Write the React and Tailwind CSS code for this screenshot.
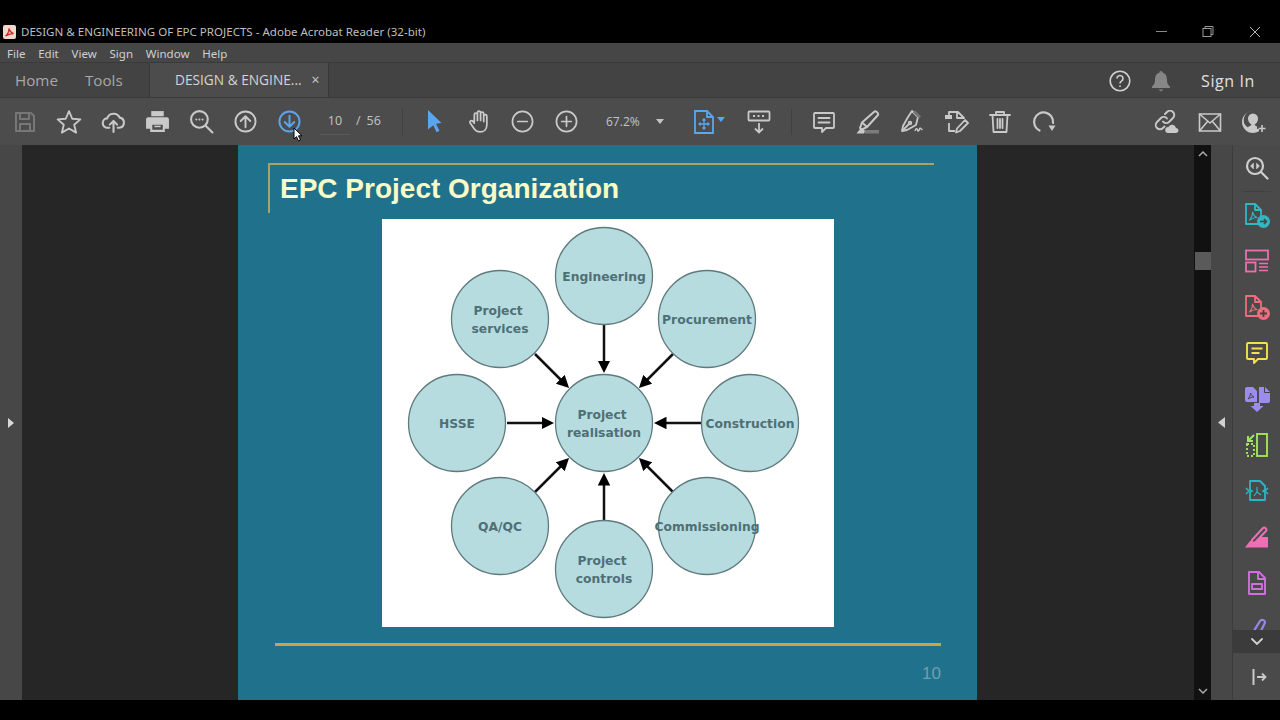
import React from "react";

const Svg = ({ children, size = 24, className = "", fill = "none", sw = 2 }) => (
  <svg width={size} height={size} viewBox="0 0 24 24" fill={fill} stroke={fill === "none" ? "currentColor" : "none"} strokeWidth={sw} strokeLinecap="round" strokeLinejoin="round" className={className}>
    {children}
  </svg>
);

// toolbar icons
const SaveIcon = () => (
  <Svg className="text-[#777777]">
    <path d="M3 3h15l3 3v15H3z" />
    <path d="M7 3v6h9V3M7 21v-7h10v7" />
  </Svg>
);
const StarIcon = () => (
  <Svg size={26} sw={1.7}><path d="M12 2l3 7 7.5.6-5.7 4.9 1.8 7.3L12 18l-6.6 3.8 1.8-7.3L1.5 9.6 9 9z" /></Svg>
);
const UploadCloud = () => (
  <Svg size={25}>
    <path d="M8 18H6.5a4.5 4.5 0 0 1-.6-9A6.5 6.5 0 0 1 18 8.300a4.900 4.900 0 0 1-.5 9.700H16" />
    <path d="M12 22v-10M8.500 15l3.500-3.500 3.500 3.500" />
  </Svg>
);
const PrintIcon = () => (
  <Svg size={25} fill="currentColor">
    <path d="M6 2h12v5H6z" />
    <path fillRule="evenodd" d="M3 8h18a2 2 0 0 1 2 2v9h-4v3H5v-3H1v-9a2 2 0 0 1 2-2zm4 7v5h10v-5z" />
    <path d="M9 16h6v1.500H9z" />
  </Svg>
);
const ZoomDots = () => (
  <Svg size={25}>
    <circle cx="10" cy="10" r="8" />
    <path d="M16 16l6.500 6.500" />
    <path d="M7 10h.01M10 10h.01M13 10h.01" />
  </Svg>
);
const CircleArrow = ({ up, className = "" }) => (
  <Svg size={23} className={className}>
    <circle cx="12" cy="12" r="10.500" />
    {up ? <path d="M12 18V7M7 11.500L12 6.500l5 5" /> : <path d="M12 6v11M7 12.500l5 5 5-5" />}
  </Svg>
);
const PointerIcon = () => (
  <svg width="15" height="23" viewBox="0 0 15 23"><path d="M1 0l13.500 13-5.500.7 3.500 7-3 1.500-3.200-7L1 19.500z" fill="#5aa6ee" /></svg>
);
const HandIcon = () => (
  <Svg size={25} sw={1.700}>
    <path d="M8 12V5.500a1.500 1.500 0 0 1 3 0V11M11 11V3.500a1.500 1.500 0 0 1 3 0V11M14 11V4.500a1.500 1.500 0 0 1 3 0V12M17 12V7a1.500 1.500 0 0 1 3 0v8c0 4-2.500 7-6.500 7-3 0-4.500-1.200-6-3.500L4 13.500c-1-1.500 1-3 2.500-1.800L8 13.500" />
  </Svg>
);
const CircleSign = ({ plus }) => (
  <Svg size={23} sw={1.800}>
    <circle cx="12" cy="12" r="10.500" />
    <path d="M7 12h10" />
    {plus && <path d="M12 7v10" />}
  </Svg>
);
const FitIcon = () => (
  <svg width="20" height="24" viewBox="0 0 20 24" fill="none" stroke="#5aa6ee" strokeWidth="1.800">
    <path d="M1 1h12l6 6v16H1z" />
    <path d="M13 1v6h6" />
    <path d="M10 9v10M5 14h10M8.500 10.500L10 9l1.500 1.500M8.500 17.500L10 19l1.500-1.500M6.500 12.500L5 14l1.500 1.500M13.500 12.500L15 14l-1.500 1.500" strokeWidth="1.300" />
  </svg>
);
const ScrollModeIcon = () => (
  <svg width="24" height="24" viewBox="0 0 24 24" fill="none" stroke="currentColor" strokeWidth="1.800">
    <rect x="1.500" y="1.500" width="21" height="9" rx="1" />
    <path d="M6 6h2M10.500 6h2M15 6h2" strokeWidth="2" />
    <path d="M12 13v9M8 18.500l4 4 4-4" />
  </svg>
);
const CommentIcon = () => (
  <Svg size={24} sw={1.800}>
    <path d="M3 3h18a1 1 0 0 1 1 1v13a1 1 0 0 1-1 1h-7l-4 4v-4H3a1 1 0 0 1-1-1V4a1 1 0 0 1 1-1z" />
    <path d="M6.500 8h11M6.500 12.500h11" />
  </Svg>
);
const HighlightIcon = () => (
  <svg width="24" height="24" viewBox="0 0 24 24" fill="none" stroke="currentColor" strokeWidth="2" strokeLinejoin="round">
    <path d="M18.500 1.500c1-1 4.500 2 3.500 3.500L11 17l-5-4.500z" />
    <path d="M6 12.500L4 18l2 1.500 5-2.500" />
    <path d="M0.500 23.500l3.500-4.500h3l2 2-1 2.500z" fill="currentColor" stroke="none" />
    <rect x="9" y="20" width="14" height="3.500" fill="#7c7c7c" stroke="none" />
  </svg>
);
const PenIcon = () => (
  <svg width="24" height="24" viewBox="0 0 24 24" fill="none" stroke="currentColor" strokeWidth="1.800" strokeLinejoin="round">
    <path d="M12 1l6 6-2 8-9 5-5 1 1-5 5-9z" />
    <path d="M3 20l6-6" />
    <circle cx="10" cy="13" r="1.300" />
    <path d="M14 1.500l6 6" stroke="#777777" strokeWidth="3" />
    <path d="M15 21c1-3 2-3 2.500-1s1.500 1 2-1 1.500 0 3 1" strokeWidth="1.400" />
  </svg>
);
const EditPdfIcon = () => (
  <svg width="25" height="24" viewBox="0 0 25 24" fill="none" stroke="currentColor" strokeWidth="1.800" strokeLinejoin="round">
    <path d="M5 8V2h9l6 6h-7V2" />
    <rect x="1" y="5" width="7" height="4" fill="currentColor" stroke="none" />
    <path d="M5 13v8h6" />
    <path d="M21 10l3 3-8 8-4 1.500 1-4z" />
  </svg>
);
const TrashIcon = () => (
  <Svg size={24} sw={1.800}>
    <path d="M2 5h20M8 5V2h8v3M4.500 5l1 17h13l1-17" />
    <path d="M9.500 9v9M12 9v9M14.500 9v9" />
  </Svg>
);
const RotateIcon = () => (
  <svg width="24" height="24" viewBox="0 0 24 24" fill="none" stroke="currentColor" strokeWidth="2.200" strokeLinecap="round">
    <path d="M7.500 20.500A9.500 9.500 0 1 1 21 13" />
    <path d="M16.500 15.500h7L20 21z" fill="currentColor" stroke="none" />
  </svg>
);
const LinkCloudIcon = () => (
  <svg width="26" height="24" viewBox="0 0 26 24" fill="none" stroke="currentColor" strokeWidth="1.900" strokeLinecap="round">
    <path d="M10 11.500a4 4 0 0 0 6 .5l4-4a4 4 0 0 0-6-6l-2 2" />
    <path d="M14 8.500a4 4 0 0 0-6-.5l-4 4a4 4 0 0 0 6 6l1.500-1.500" />
    <path d="M15 23a3 3 0 0 1 .5-6 4 4 0 0 1 7.500 1 2.500 2.500 0 0 1 0 5z" fill="currentColor" stroke="none" />
  </svg>
);
const MailIcon = () => (
  <Svg size={24} sw={1.600}>
    <rect x="1.500" y="4" width="21" height="17" />
    <path d="M1.500 4l10.500 9 10.500-9M1.500 21l8-9.500M22.500 21l-8-9.500" />
  </Svg>
);
const UserPlusIcon = () => (
  <svg width="26" height="24" viewBox="0 0 26 24" fill="none">
    <path fillRule="evenodd" d="M12 1a11 11 0 1 0 0 22 11 11 0 0 0 6-1.800V19h-2v-2.500c-1-.5-2-1-2.500-1.700 2-1.300 3.500-3.500 3.500-6A5 5 0 0 0 12 3.500a5 5 0 0 0-5 5.300c0 2.500 1.500 4.700 3.500 6-.5.800-2 1.500-4 2.500A9 9 0 0 1 12 1z" fill="currentColor" />
    <path d="M21 15v7M17.500 18.500h7" stroke="currentColor" strokeWidth="1.600" />
  </svg>
);
const Caret = ({ className = "" }) => (
  <svg width="8" height="5" viewBox="0 0 8 5" className={className}><path d="M0 0h8L4 5z" fill="currentColor" /></svg>
);

const Btn = ({ children }) => (
  <div className="w-[44px] h-full flex items-center justify-center shrink-0 text-[#c9c9c9]">{children}</div>
);

const circles = [
  { x: 604, y: 276, t: ["Engineering"] },
  { x: 500, y: 319, t: ["Project", "services"] },
  { x: 707, y: 319, t: ["Procurement"] },
  { x: 457, y: 423, t: ["HSSE"] },
  { x: 750, y: 423, t: ["Construction"] },
  { x: 500, y: 526, t: ["QA/QC"] },
  { x: 707, y: 526, t: ["Commissioning"] },
  { x: 604, y: 569, t: ["Project", "controls"] },
  { x: 604, y: 423, t: ["Project", "realisation"] },
];

const arrows = [
  [604, 325, 604, 363],
  [535, 354, 562, 381],
  [673, 354, 646, 381],
  [507, 423, 544, 423],
  [701, 423, 664, 423],
  [535, 492, 562, 465],
  [673, 492, 646, 465],
  [604, 520, 604, 483],
];

function Diagram() {
  return (
    <svg viewBox="382 219 452 408" className="w-[452px] h-[408px] block bg-white">
      <defs>
        <marker id="head" markerWidth="5" markerHeight="5" refX="1" refY="2.500" orient="auto">
          <path d="M0 0L5 2.500 0 5z" fill="#000000" />
        </marker>
      </defs>
      {arrows.map((a, i) => (
        <line key={i} x1={a[0]} y1={a[1]} x2={a[2]} y2={a[3]} stroke="#111111" strokeWidth="2.500" markerEnd="url(#head)" />
      ))}
      {circles.map((c, i) => (
        <g key={i}>
          <circle cx={c.x} cy={c.y} r="48.500" fill="#b7dce0" stroke="#5f7a7c" strokeWidth="1.300" />
          {c.t.map((line, j) => (
            <text key={j} x={c.t.length > 1 && j === 0 ? c.x - 2 : c.x} y={c.y + 5 + (c.t.length > 1 ? (j === 0 ? -9 : 9) : 0)} textAnchor="middle" fontFamily='"DejaVu Sans", sans-serif' fontWeight="700" fontSize="12.300" fill="#4f6f76">
              {line}
            </text>
          ))}
        </g>
      ))}
    </svg>
  );
}

const PdfDoc = ({ c, badgeIcon }) => (
  <svg width="26" height="26" viewBox="0 0 26 26" fill="none" stroke={c} strokeWidth="1.800" strokeLinejoin="round">
    <path d="M2 2h9l6 6v14H2z" />
    <path d="M11 2v6h6" />
    <path d="M5.500 18c2-2 3-6 3-8 1 3 2.500 5 4.500 5.500-3 0-5 1-7.500 2.500z" strokeWidth="1.100" />
    <circle cx="19.500" cy="19.500" r="6.500" fill={c} stroke="none" />
    {badgeIcon === "plus" && <path d="M19.500 16v7M16 19.500h7" stroke="#444444" strokeWidth="1.800" />}
    {badgeIcon === "arrow" && <path d="M16 19.500h6.500M20 17l2.500 2.500L20 22" stroke="#444444" strokeWidth="1.600" />}
  </svg>
);

const sideIcons = [
  <PdfDoc key="a" c="#2fb8c4" badgeIcon="arrow" />,
  <svg key="b" width="24" height="24" viewBox="0 0 24 24" fill="none" stroke="#ec6fae" strokeWidth="1.800">
    <rect x="1" y="1.500" width="22" height="9" />
    <rect x="1" y="13.500" width="9.500" height="9" />
    <path d="M14 14.500h9M14 18h9M14 21.500h9" strokeWidth="1.400" />
  </svg>,
  <PdfDoc key="c" c="#ee6e7c" badgeIcon="plus" />,
  <svg key="d" width="24" height="24" viewBox="0 0 24 24" fill="none" stroke="#f4e04d" strokeWidth="1.900" strokeLinejoin="round">
    <path d="M3 2h18a1 1 0 0 1 1 1v14a1 1 0 0 1-1 1h-8l-4 4v-4H3a1 1 0 0 1-1-1V3a1 1 0 0 1 1-1z" />
    <path d="M6.500 7.500h11M6.500 12h8" />
  </svg>,
  <svg key="e" width="26" height="25" viewBox="0 0 26 25" fill="#9c8cf2">
    <path d="M1 2a2 2 0 0 1 2-2h6l4 4v11H3a2 2 0 0 1-2-2z" />
    <path d="M4 12c1.500-1.500 2.500-4 2.500-6 .8 2 1.800 3.500 3.500 4-2.200 0-4 .8-6 2z" fill="none" stroke="#444444" strokeWidth="1" />
    <path d="M15 0h6l5 5v9a2 2 0 0 1-2 2h-9z" />
    <path d="M20.500 0v5.500H26" fill="none" stroke="#444444" strokeWidth="1" />
    <path d="M10 16h6v3h3.500l-6.500 6-6.500-6H10z" />
  </svg>,
  <svg key="f" width="23" height="24" viewBox="0 0 23 24" fill="none" stroke="#a3e356" strokeWidth="1.900">
    <rect x="12" y="1" width="10" height="22" />
    <path d="M2 11h7v12H2z" strokeDasharray="2 2" />
    <path d="M9 2L3.500 7.500M3 3v5h5" strokeWidth="2" />
  </svg>,
  <svg key="g" width="24" height="24" viewBox="0 0 24 24" fill="none" stroke="#25b9c4" strokeWidth="1.800" strokeLinejoin="round">
    <path d="M5 2h10l5 5v4l-2 1 2 1v8H5v-8l2-1-2-1z" />
    <path d="M9 17l3-4 4 3M12 13V8" strokeWidth="1.200" />
    <path d="M1 9l3 3-3 3M23 9l-3 3 3 3" strokeWidth="1.500" />
  </svg>,
  <svg key="h" width="24" height="22" viewBox="0 0 24 22" fill="none">
    <path d="M7 14L18 2c1.500-1.500 4.500 1 3 3L10 16.500H6z" stroke="#f06eb4" strokeWidth="2" strokeLinejoin="round" />
    <path d="M0 21.500L5 15h2l2.500 2L15 11h8v10.500z" fill="#f06eb4" />
  </svg>,
  <svg key="i" width="20" height="24" viewBox="0 0 20 24" fill="none" stroke="#d06fe0" strokeWidth="1.900" strokeLinejoin="round">
    <path d="M2 1h10l6 6v16H2z" />
    <path d="M11 1v7h7" />
    <rect x="5" y="13" width="10" height="5" />
  </svg>,
  <svg key="j" width="24" height="24" viewBox="0 0 24 24" fill="none" stroke="#9c85e8" strokeWidth="2.200" strokeLinecap="round">
    <path d="M4 22L15 4c1.500-2 5-1 5 1.500L14 18" />
  </svg>,
];

export default function App() {
  return (
    <div className="w-[1280px] h-[720px] overflow-hidden bg-black flex flex-col relative font-['Open_Sans',sans-serif]">
      {/* Title bar */}
      <div className="h-[43px] shrink-0 bg-black flex items-center pt-[20px] pl-[3px] pr-[19px] text-[#bdbdbd]">
        <svg width="13" height="14" viewBox="0 0 13 14" className="mr-[5px]">
          <rect width="13" height="14" rx="2" fill="#f0d8d0" />
          <path d="M2.500 11c2-1.500 3.500-5 3.500-7.500 1 3 2.500 4.500 4.500 5-3 0-5.500 1-8 2.500z" fill="none" stroke="#c8281e" strokeWidth="1.300" />
        </svg>
        <span className="text-[11.550px] font-['Noto_Sans',sans-serif] text-[#bfbfbf]">DESIGN &amp; ENGINEERING OF EPC PROJECTS - Adobe Acrobat Reader (32-bit)</span>
        <div className="ml-auto flex items-center">
          <div className="w-[11px] h-[1.500px] bg-[#8a8a8a]" />
          <svg width="12" height="11" viewBox="0 0 12 11" fill="none" stroke="#9a9a9a" className="ml-[35px]"><rect x="1" y="2.500" width="8" height="8" /><path d="M3 2.500V.5h8v8H9" /></svg>
          <svg width="12" height="12" viewBox="0 0 12 12" stroke="#b5b5b5" className="ml-[35px]"><path d="M1 1l10 10M11 1L1 11" /></svg>
        </div>
      </div>

      {/* Menu bar */}
      <div className="h-[20px] shrink-0 bg-[#464646] border-b border-[#3a3a3a] flex items-center pt-[2px] pl-[7px] gap-[12.800px] text-[11.500px] leading-none text-[#d0d0d0] font-['Noto_Sans',sans-serif]">
        <span>File</span>
        <span>Edit</span>
        <span>View</span>
        <span>Sign</span>
        <span>Window</span>
        <span>Help</span>
      </div>

      {/* Tabs */}
      <div className="h-[35px] shrink-0 bg-[#434343] flex items-stretch border-b border-[#3a3a3a]">
        <div className="w-[150px] flex items-center pt-[1px] pl-[15px] gap-[27px] text-[15.200px] text-[#a8a8a8] border-r border-[#383838]">
          <span>Home</span>
          <span>Tools</span>
        </div>
        <div className="w-[179px] bg-[#4c4c4c] flex items-center pl-[25px] gap-[10px] text-[13.700px] text-[#d4d4d4] border-r border-[#383838]">
          <span>DESIGN &amp; ENGINE...</span>
          <span className="text-[14px] leading-none text-[#cccccc]">×</span>
        </div>
        <div className="ml-auto flex items-center pt-[2px] text-[#d0d0d0]">
          <svg width="22" height="22" viewBox="0 0 22 22" fill="none" stroke="currentColor" strokeWidth="1.600"><circle cx="11" cy="11" r="9.800" /><path d="M8 8.500a3 3 0 1 1 4.500 2.600c-1 .6-1.500 1-1.500 2.400" /><path d="M11 15.500v1.500" /></svg>
          <svg width="18" height="21" viewBox="0 0 18 21" className="ml-[21px] mr-[31px]" fill="#868686"><path d="M9 0a1.800 1.800 0 0 1 1.800 1.800C14 2.800 15 5.500 15 9c0 4 1.500 5 3 6.500V17H0v-1.500C1.500 14 3 13 3 9c0-3.500 1-6.200 4.200-7.200A1.800 1.800 0 0 1 9 0z" /><path d="M6.500 18.500h5L9 20.500z" /></svg>
          <span className="text-[16px] tracking-[0.6px] text-[#e0e0e0] mr-[25px]">Sign In</span>
        </div>
      </div>

      {/* Toolbar */}
      <div className="h-[47px] shrink-0 bg-[#4c4c4c] flex items-center pl-[3px]">
        <Btn><SaveIcon /></Btn>
        <Btn><StarIcon /></Btn>
        <Btn><UploadCloud /></Btn>
        <Btn><PrintIcon /></Btn>
        <Btn><ZoomDots /></Btn>
        <Btn><CircleArrow up /></Btn>
        <Btn><CircleArrow className="text-[#5aa6ee]" /></Btn>
        <div className="w-[91px] h-full flex items-center text-[12.500px] text-[#c4c4c4] shrink-0 pl-[9px]">
          <span className="w-[30px] text-center border-b border-[#5a5a5a] leading-[26px]">10</span>
          <span className="ml-[6px]">/</span>
          <span className="ml-[6px]">56</span>
        </div>
        <div className="w-px h-[26px] bg-[#404040] shrink-0" />
        <div className="w-[9px] shrink-0" />
        <Btn><PointerIcon /></Btn>
        <Btn><HandIcon /></Btn>
        <Btn><CircleSign /></Btn>
        <Btn><CircleSign plus /></Btn>
        <div className="w-[88px] h-full flex items-center shrink-0 pl-[18px] text-[12px] text-[#c4c4c4]">
          <span className="w-[44px]">67.2%</span>
          <Caret className="ml-[6px] text-[#c4c4c4]" />
        </div>
        <div className="w-[61px] h-full flex items-center shrink-0 pl-[18px] gap-[3px]">
          <FitIcon />
          <Caret className="text-[#5aa6ee] mb-[4px]" />
        </div>
        <Btn><ScrollModeIcon /></Btn>
        <div className="w-[10px] shrink-0" />
        <div className="w-px h-[26px] bg-[#404040] shrink-0" />
        <div className="w-[10px] shrink-0" />
        <Btn><CommentIcon /></Btn>
        <Btn><HighlightIcon /></Btn>
        <Btn><PenIcon /></Btn>
        <Btn><EditPdfIcon /></Btn>
        <Btn><TrashIcon /></Btn>
        <Btn><RotateIcon /></Btn>
        <div className="ml-auto flex h-full pr-[4px]">
          <Btn><LinkCloudIcon /></Btn>
          <Btn><MailIcon /></Btn>
          <Btn><UserPlusIcon /></Btn>
        </div>
      </div>

      {/* Main */}
      <div className="h-[555px] shrink-0 flex">
        <div className="w-[22px] shrink-0 bg-[#474747] flex items-center justify-center">
          <svg width="6" height="10" viewBox="0 0 6 10"><path d="M0 0l6 5-6 5z" fill="#d8d8d8" /></svg>
        </div>

        <div className="w-[216px] shrink-0 bg-[#262626]" />

        {/* Slide */}
        <div className="w-[739px] shrink-0 bg-[#20728c] pt-[18px] flex flex-col items-start">
          <div className="ml-[30px] w-[666px] h-[50px] border-t-2 border-l-2 border-[#a9a263] pl-[10px] pt-[6px]">
            <h1 className="font-['Liberation_Sans',sans-serif] font-bold text-[28px] leading-[36px] text-[#fbfbc8]">EPC Project Organization</h1>
          </div>
          <div className="ml-[144px] mt-[6px]">
            <Diagram />
          </div>
          <div className="ml-[37px] mt-[16px] w-[666px] h-[3px] bg-[#c9a544]" />
          <div className="ml-[37px] w-[666px] mt-[18px] text-right font-['Liberation_Sans',sans-serif] text-[17px] leading-[20px] text-[#6f9fb0]">10</div>
        </div>

        <div className="w-[217px] shrink-0 bg-[#262626]" />

        {/* Scrollbar */}
        <div className="w-[17px] shrink-0 bg-[#111111] flex flex-col items-center justify-between py-[6px] text-[#a8a8a8] relative">
          <svg width="10" height="6" viewBox="0 0 10 6" fill="none" stroke="currentColor" strokeWidth="1.500"><path d="M1 5l4-4 4 4" /></svg>
          <div className="absolute top-[107px] left-[1px] w-[16px] h-[18px] bg-[#5a5a5a]" />
          <svg width="10" height="6" viewBox="0 0 10 6" fill="none" stroke="currentColor" strokeWidth="1.500"><path d="M1 1l4 4 4-4" /></svg>
        </div>

        <div className="w-[22px] shrink-0 bg-[#474747] border-r border-[#3c3c3c] flex items-center justify-center">
          <svg width="7" height="11" viewBox="0 0 7 11"><path d="M7 0L0 5.500 7 11z" fill="#d0d0d0" /></svg>
        </div>

        {/* Tool pane */}
        <div className="w-[47px] shrink-0 bg-[#4a4a4a] flex flex-col">
          <div className="h-[485px] overflow-hidden flex flex-col items-center">
            <div className="h-[47px] w-[28px] shrink-0 pb-[1px] flex items-center justify-center border-b border-[#404040] text-[#cfcfcf]">
              <svg width="24" height="24" viewBox="0 0 24 24" fill="none" stroke="currentColor" strokeWidth="2.200"><circle cx="10" cy="10" r="8" /><path d="M16 16l6.500 6.500" strokeLinecap="round" /><path d="M8.500 7L5.500 10l3 3zM11.500 7l3 3-3 3z" fill="currentColor" strokeWidth="0.500" /></svg>
            </div>
            {sideIcons.map((icon, i) => (
              <div key={i} className="h-[46px] shrink-0 flex items-center justify-center">{icon}</div>
            ))}
          </div>
          <div className="h-[23px] shrink-0 bg-[#3b3b3b] flex items-center justify-center text-[#d0d0d0]">
            <svg width="12" height="7" viewBox="0 0 12 7" fill="none" stroke="currentColor" strokeWidth="1.800" strokeLinecap="round"><path d="M1 1l5 5 5-5" /></svg>
          </div>
          <div className="flex-1 flex items-center justify-center pl-[5px] text-[#c9c9c9]">
            <svg width="15" height="16" viewBox="0 0 15 16" fill="none" stroke="currentColor" strokeWidth="2"><path d="M1.500 0v16" /><path d="M5 8h8M10 4.500L13.500 8 10 11.500" strokeWidth="1.800" /></svg>
          </div>
        </div>
      </div>

      <div className="flex-1 bg-black" />

      {/* Mouse cursor */}
      <svg width="10" height="15" viewBox="0 0 10 15" className="absolute left-[293px] top-[127px]">
        <path d="M1 1v11l2.500-2.300L5.500 14l2-1-2-4.200H9z" fill="#ffffff" stroke="#000000" strokeWidth="1" />
      </svg>
    </div>
  );
}
